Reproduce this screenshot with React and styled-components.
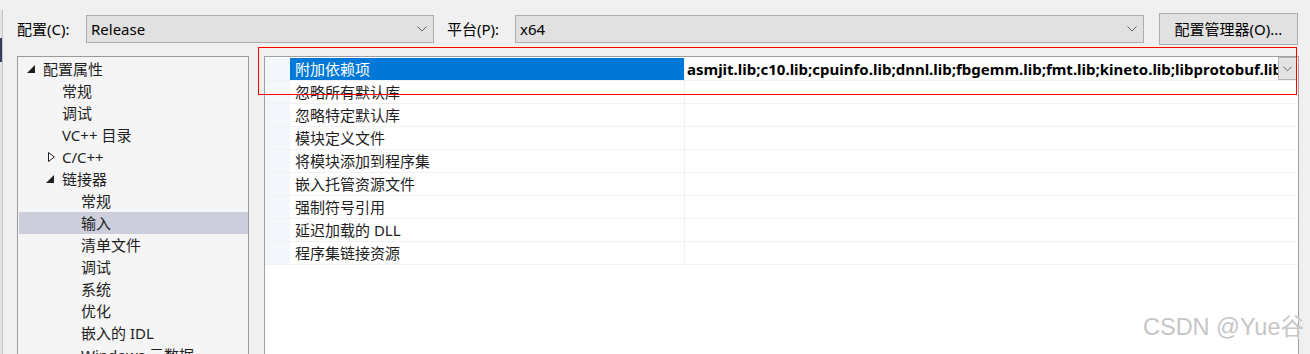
import React from 'react';
import styled, { createGlobalStyle } from 'styled-components';

const Global = createGlobalStyle`
  html, body { margin: 0; padding: 0; background: #f0f0f0; }
  body {
    font-family: "Noto Sans", "Noto Sans CJK SC", sans-serif;
    font-size: 15px;
    color: #000;
  }
  * { box-sizing: border-box; }
`;

const Window = styled.div`
  position: relative;
  width: 1310px;
  height: 354px;
  overflow: hidden;
  background: #f0f0f0;
  display: flex;
`;

const EdgeStrip = styled.div`
  flex: none;
  width: 3px;
  margin-top: 10px;
  background: #e4e4e4;
  border-right: 1px solid #c4c4c4;
  display: flex;
  flex-direction: column;
`;

const EdgeMark = styled.div`
  margin-top: 28px;
  width: 2px;
  height: 24px;
  background: #34405e;
`;

const Content = styled.div`
  flex: 1;
  display: flex;
  flex-direction: column;
  padding: 13px 0 0 14px;
  gap: 11px;
`;

const Toolbar = styled.div`
  display: flex;
  align-items: center;
  height: 32px;
`;

const Label = styled.div`
  flex: none;
  width: ${p => p.$w}px;
  line-height: 20px;
  white-space: nowrap;
  color: #000;
`;

const Select = styled.div`
  flex: none;
  width: ${p => p.$w}px;
  height: 28px;
  margin-right: ${p => p.$mr || 0}px;
  border: 1px solid #adadad;
  background: #e1e1e1;
  display: flex;
  align-items: center;
  padding: 0 6px 0 4px;
  color: #000;
`;

const SelectText = styled.span`
  flex: 1;
  line-height: 20px;
  white-space: nowrap;
`;

const Button = styled.div`
  flex: none;
  width: 139px;
  height: 32px;
  border: 1px solid #adadad;
  background: #e1e1e1;
  display: flex;
  align-items: center;
  justify-content: center;
  line-height: 20px;
  white-space: nowrap;
  color: #000;
`;

const Panels = styled.div`
  display: flex;
  gap: 15px;
  height: 320px;
`;

const Tree = styled.div`
  flex: none;
  width: 232px;
  height: 100%;
  border: 1px solid #9a9a9a;
  background: #f5f5f5;
  padding-top: 1px;
  display: flex;
  flex-direction: column;
`;

const TreeRow = styled.div`
  flex: none;
  height: 22px;
  display: flex;
  align-items: center;
  margin-left: 1px;
  padding-left: ${p => p.$level * 19 + 7}px;
  background: ${p => (p.$selected ? '#cccedb' : 'transparent')};
  color: #1e1e1e;
  white-space: nowrap;
  line-height: 22px;
`;

const Toggle = styled.span`
  flex: none;
  width: 17px;
  height: 22px;
  display: flex;
  align-items: center;
  padding-left: ${p => (p.$open ? 1 : 3)}px;
`;

const Grid = styled.div`
  flex: none;
  width: 1035px;
  height: 100%;
  border: 1px solid #a0a0a0;
  background: #fff;
  padding-top: 1px;
  display: flex;
  flex-direction: column;
`;

const GridRow = styled.div`
  flex: none;
  height: 23px;
  display: flex;
  border-bottom: 1px solid #f0f1f4;
`;

const Gutter = styled.div`
  flex: none;
  width: 25px;
  background: #f3f6fb;
`;

const NameCell = styled.div`
  flex: none;
  width: 395px;
  padding-left: 5px;
  border-right: 1px solid #f0f1f4;
  background: ${p => (p.$selected ? '#0078d7' : '#fff')};
  color: ${p => (p.$selected ? '#fff' : '#1e1e1e')};
  line-height: 22px;
  white-space: nowrap;
`;

const ValueCell = styled.div`
  flex: 1;
  min-width: 0;
  display: flex;
  align-items: stretch;
  padding-left: 2px;
`;

const ValueText = styled.div`
  flex: 1;
  min-width: 0;
  overflow: hidden;
  white-space: nowrap;
  font-weight: 700;
  line-height: 22px;
  color: #000;
`;

const DropButton = styled.div`
  flex: none;
  width: 19px;
  margin: -1px 1px 0 0;
  height: 23px;
  border: 1px solid #b4b4b4;
  background: #e3e3e3;
  display: flex;
  align-items: center;
  justify-content: center;
`;

const Annotation = styled.div`
  position: absolute;
  left: 258px;
  top: 47px;
  width: 1039px;
  height: 48px;
  border: 1px solid #f00;
  pointer-events: none;
`;

const Watermark = styled.div`
  position: absolute;
  left: 1143px;
  top: 312px;
  font-family: "Liberation Sans", "Noto Sans CJK SC", sans-serif;
  font-size: 23.5px;
  line-height: 30px;
  color: #c6c6c6;
  text-shadow: 0 1px 1px rgba(255, 255, 255, 0.8);
  white-space: nowrap;
  pointer-events: none;
`;

const Chevron = ({ w = 10, color = '#606060' }) => (
  <svg width={w} height={6} viewBox="0 0 10 6" style={{ flex: 'none' }}>
    <polyline points="0.5,0.5 5,5 9.5,0.5" fill="none" stroke={color} strokeWidth="1" />
  </svg>
);

const OpenTri = () => (
  <svg width="8" height="8" viewBox="0 0 8 8">
    <polygon points="8,0 8,8 0,8" fill="#1e1e1e" />
  </svg>
);

const ClosedTri = () => (
  <svg width="7" height="10" viewBox="0 0 7 10">
    <polygon points="0.5,0.5 6.3,5 0.5,9.5" fill="#fff" stroke="#1e1e1e" strokeWidth="1" />
  </svg>
);

const treeItems = [
  { level: 0, text: '配置属性', toggle: 'open' },
  { level: 1, text: '常规' },
  { level: 1, text: '调试' },
  { level: 1, text: 'VC++ 目录' },
  { level: 1, text: 'C/C++', toggle: 'closed' },
  { level: 1, text: '链接器', toggle: 'open' },
  { level: 2, text: '常规' },
  { level: 2, text: '输入', selected: true },
  { level: 2, text: '清单文件' },
  { level: 2, text: '调试' },
  { level: 2, text: '系统' },
  { level: 2, text: '优化' },
  { level: 2, text: '嵌入的 IDL' },
  { level: 2, text: 'Windows 元数据' },
];

const gridRows = [
  {
    name: '附加依赖项',
    value:
      'asmjit.lib;c10.lib;cpuinfo.lib;dnnl.lib;fbgemm.lib;fmt.lib;kineto.lib;libprotobuf.lib;libprotobuf-lite.lib',
    selected: true,
  },
  { name: '忽略所有默认库' },
  { name: '忽略特定默认库' },
  { name: '模块定义文件' },
  { name: '将模块添加到程序集' },
  { name: '嵌入托管资源文件' },
  { name: '强制符号引用' },
  { name: '延迟加载的 DLL' },
  { name: '程序集链接资源' },
];

export default function App() {
  return (
    <>
      <Global />
      <Window>
        <EdgeStrip>
          <EdgeMark />
        </EdgeStrip>
        <Content>
          <Toolbar>
            <Label $w={69}>配置(C):</Label>
            <Select $w={348} $mr={13}>
              <SelectText>Release</SelectText>
              <Chevron />
            </Select>
            <Label $w={68}>平台(P):</Label>
            <Select $w={629} $mr={15}>
              <SelectText>x64</SelectText>
              <Chevron />
            </Select>
            <Button>配置管理器(O)...</Button>
          </Toolbar>
          <Panels>
            <Tree>
              {treeItems.map((it, i) => (
                <TreeRow key={i} $level={it.level} $selected={it.selected}>
                  <Toggle $open={it.toggle === 'open'}>
                    {it.toggle === 'open' && <OpenTri />}
                    {it.toggle === 'closed' && <ClosedTri />}
                  </Toggle>
                  {it.text}
                </TreeRow>
              ))}
            </Tree>
            <Grid>
              {gridRows.map((r, i) => (
                <GridRow key={i}>
                  <Gutter />
                  <NameCell $selected={r.selected}>{r.name}</NameCell>
                  <ValueCell>
                    <ValueText>{r.value || ''}</ValueText>
                    {r.selected && (
                      <DropButton>
                        <Chevron w={9} color="#555" />
                      </DropButton>
                    )}
                  </ValueCell>
                </GridRow>
              ))}
            </Grid>
          </Panels>
        </Content>
        <Annotation />
        <Watermark>CSDN @Yue谷</Watermark>
      </Window>
    </>
  );
}
